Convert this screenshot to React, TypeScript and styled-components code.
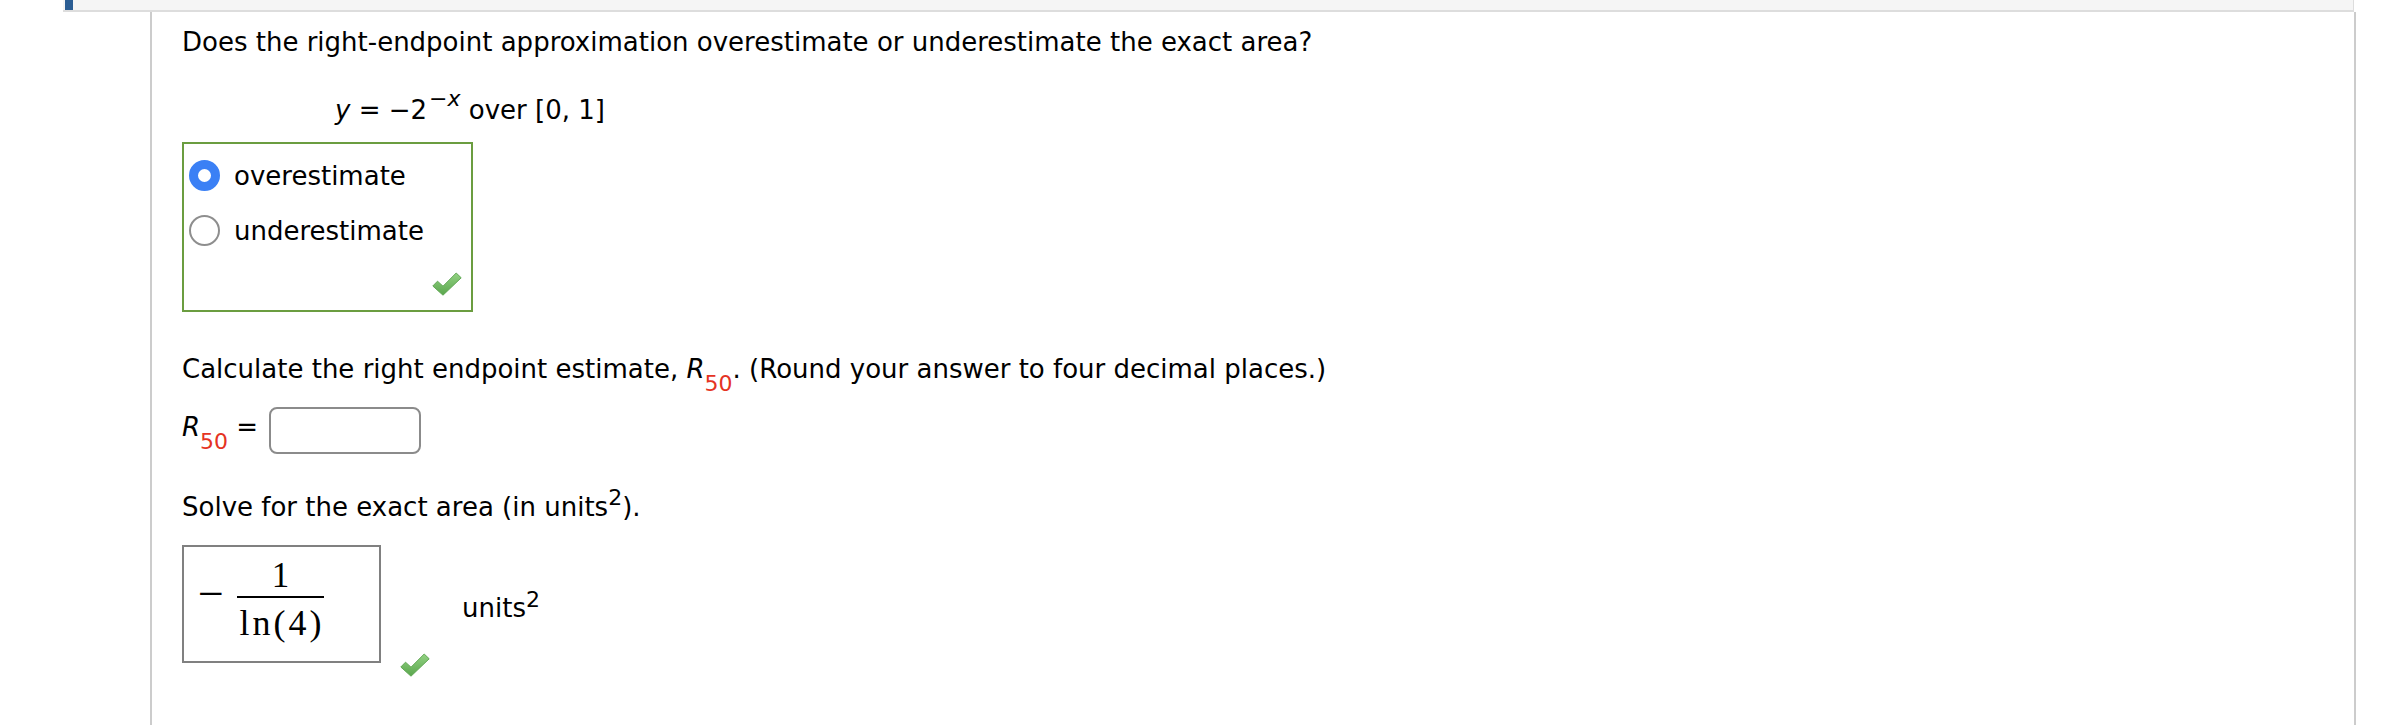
import React from "react";
import styled, { createGlobalStyle } from "styled-components";

const GlobalStyle = createGlobalStyle`
  html, body {
    margin: 0;
    padding: 0;
    background: #ffffff;
  }
  body {
    font-family: "DejaVu Sans", Verdana, sans-serif;
    color: #000000;
  }
`;

const Page = styled.div`
  width: 2388px;
  height: 725px;
  padding-left: 63px;
  box-sizing: border-box;
  overflow: hidden;
`;

const TopStrip = styled.div`
  width: 2290px;
  height: 10px;
  background: #f5f5f5;
  border-bottom: 2px solid #dddddd;
  border-right: 1px solid #dddddd;
  display: flex;
`;

const BlueMark = styled.div`
  width: 8px;
  height: 10px;
  margin-left: 2px;
  background: #2b5d93;
`;

const Panel = styled.div`
  margin-left: 87px;
  width: 2206px;
  height: 713px;
  box-sizing: border-box;
  border-left: 2px solid #cccccc;
  border-right: 2px solid #cccccc;
  padding: 15px 0 0 30px;
  font-size: 26px;
  line-height: 30px;
`;

const Para = styled.div<{ $top?: number; $indent?: number }>`
  margin-top: ${(p) => p.$top ?? 0}px;
  margin-left: ${(p) => p.$indent ?? 0}px;
  white-space: nowrap;
`;

const Var = styled.i`
  font-style: italic;
`;

const Sup = styled.sup<{ $raise: number; $gap?: number }>`
  font-size: 22px;
  line-height: 0;
  vertical-align: ${(p) => p.$raise}px;
  margin-left: ${(p) => p.$gap ?? 0}px;
`;

const Sub = styled.sub`
  font-size: 22px;
  line-height: 0;
  vertical-align: -13px;
  color: #e53323;
`;

const RadioGroup = styled.div`
  margin-top: 17px;
  width: 291px;
  height: 170px;
  box-sizing: border-box;
  border: 2px solid #6b9d40;
  padding: 4px 9px 0 5px;
  display: flex;
  flex-direction: column;
`;

const RadioRow = styled.label`
  height: 55px;
  display: flex;
  align-items: center;
  gap: 14px;
`;

const RadioCircle = styled.span<{ $checked?: boolean }>`
  width: 31px;
  height: 31px;
  border-radius: 50%;
  box-sizing: border-box;
  flex: none;
  background: #ffffff;
  border: ${(p) => (p.$checked ? "9px solid #3b80f5" : "2.5px solid #8e8e8e")};
`;

const CheckRow = styled.div`
  margin-top: 14px;
  display: flex;
  justify-content: flex-end;
`;

const AnswerRow = styled.div`
  margin-top: 23px;
  display: flex;
  align-items: center;
`;

const AnswerLabel = styled.span`
  margin-bottom: 8px;
  white-space: nowrap;
`;

const AnswerInput = styled.input`
  width: 152px;
  height: 47px;
  box-sizing: border-box;
  margin: 0 0 0 11px;
  border: 2px solid #8b8b8b;
  border-radius: 8px;
  background: #ffffff;
  outline: none;
  padding: 0 8px;
  font: inherit;
`;

const ResultRow = styled.div`
  margin-top: 23px;
  display: flex;
  align-items: flex-start;
`;

const MathBox = styled.div`
  width: 199px;
  height: 118px;
  box-sizing: border-box;
  border: 2px solid #808080;
  padding-left: 14px;
  display: flex;
  align-items: flex-start;
  font-family: "Liberation Serif", "Times New Roman", serif;
`;

const MathMinus = styled.span`
  font-size: 46px;
  line-height: 44px;
  margin-top: 25px;
  margin-right: 13px;
`;

const Fraction = styled.span`
  width: 87px;
  margin-top: 12px;
  display: flex;
  flex-direction: column;
  align-items: center;
`;

const Numerator = styled.span`
  font-size: 35px;
  line-height: 34px;
`;

const FractionBar = styled.span`
  align-self: stretch;
  height: 2px;
  margin-top: 3px;
  background: #000000;
`;

const Denominator = styled.span`
  font-size: 36px;
  line-height: 36px;
  margin-top: 7px;
  letter-spacing: 3px;
  padding-left: 3px;
  white-space: nowrap;
`;

const IconSlot = styled.span<{ $left?: number; $top?: number }>`
  display: flex;
  margin-left: ${(p) => p.$left ?? 0}px;
  margin-top: ${(p) => p.$top ?? 0}px;
`;

const Units = styled.span`
  margin-left: 32px;
  margin-top: 48px;
  white-space: nowrap;
`;

const CheckMark: React.FC = () => (
  <svg width="30" height="24" viewBox="0 0 30 24" aria-hidden="true">
    <defs>
      <linearGradient id="chk" x1="0" y1="0" x2="0" y2="1">
        <stop offset="0" stopColor="#93d283" />
        <stop offset="1" stopColor="#5aa64d" />
      </linearGradient>
    </defs>
    <polygon
      points="0.8,14 5.5,9.2 11,14.2 24.2,1 29.2,5.8 11,23.2"
      fill="url(#chk)"
      stroke="#62a856"
      strokeWidth="1"
      strokeLinejoin="round"
    />
  </svg>
);

export default function App() {
  return (
    <>
      <GlobalStyle />
      <Page>
        <TopStrip>
          <BlueMark />
        </TopStrip>
        <Panel>
          <Para>
            Does the right-endpoint approximation overestimate or underestimate the exact area?
          </Para>
          <Para $top={38} $indent={153}>
            <Var>y</Var> = −2
            <Sup $raise={13} $gap={2}>
              −<Var>x</Var>
            </Sup>{" "}
            over [0, 1]
          </Para>
          <RadioGroup>
            <RadioRow>
              <RadioCircle $checked />
              <span>overestimate</span>
            </RadioRow>
            <RadioRow>
              <RadioCircle />
              <span>underestimate</span>
            </RadioRow>
            <CheckRow>
              <CheckMark />
            </CheckRow>
          </RadioGroup>
          <Para $top={42}>
            Calculate the right endpoint estimate, <Var>R</Var>
            <Sub>50</Sub>. (Round your answer to four decimal places.)
          </Para>
          <AnswerRow>
            <AnswerLabel>
              <Var>R</Var>
              <Sub>50</Sub> =
            </AnswerLabel>
            <AnswerInput type="text" aria-label="R50" />
          </AnswerRow>
          <Para $top={38}>
            Solve for the exact area (in units<Sup $raise={11}>2</Sup>).
          </Para>
          <ResultRow>
            <MathBox>
              <MathMinus>−</MathMinus>
              <Fraction>
                <Numerator>1</Numerator>
                <FractionBar />
                <Denominator>ln(4)</Denominator>
              </Fraction>
            </MathBox>
            <IconSlot $left={19} $top={108}>
              <CheckMark />
            </IconSlot>
            <Units>
              units<Sup $raise={10}>2</Sup>
            </Units>
          </ResultRow>
        </Panel>
      </Page>
    </>
  );
}
